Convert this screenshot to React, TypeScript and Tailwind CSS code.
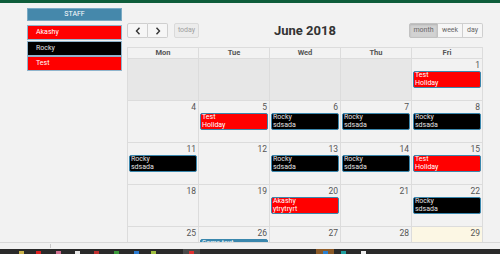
import React from 'react';

type Ev = { title: string; sub: string; color: 'red' | 'black' | 'blue' };

const cls = {
  red: 'bg-[#ff0000] text-white',
  black: 'bg-black text-[#e2e2e2]',
  blue: 'bg-[#3a87ad] text-white',
};

const weeks: { day: number | null; muted?: boolean; today?: boolean; ev?: Ev }[][] = [
  [
    { day: null, muted: true },
    { day: null, muted: true },
    { day: null, muted: true },
    { day: null, muted: true },
    { day: 1, ev: { title: 'Test', sub: 'Holiday', color: 'red' } },
  ],
  [
    { day: 4 },
    { day: 5, ev: { title: 'Test', sub: 'Holiday', color: 'red' } },
    { day: 6, ev: { title: 'Rocky', sub: 'sdsada', color: 'black' } },
    { day: 7, ev: { title: 'Rocky', sub: 'sdsada', color: 'black' } },
    { day: 8, ev: { title: 'Rocky', sub: 'sdsada', color: 'black' } },
  ],
  [
    { day: 11, ev: { title: 'Rocky', sub: 'sdsada', color: 'black' } },
    { day: 12 },
    { day: 13, ev: { title: 'Rocky', sub: 'sdsada', color: 'black' } },
    { day: 14, ev: { title: 'Rocky', sub: 'sdsada', color: 'black' } },
    { day: 15, ev: { title: 'Test', sub: 'Holiday', color: 'red' } },
  ],
  [
    { day: 18 },
    { day: 19 },
    { day: 20, ev: { title: 'Akashy', sub: 'ytrytryrt', color: 'red' } },
    { day: 21 },
    { day: 22, ev: { title: 'Rocky', sub: 'sdsada', color: 'black' } },
  ],
  [
    { day: 25 },
    { day: 26, ev: { title: 'Some text', sub: '', color: 'blue' } },
    { day: 27 },
    { day: 28 },
    { day: 29, today: true },
  ],
];

const taskIcons = [
  { x: 19, c: '#c9b24a' },
  { x: 36, c: '#e02020' },
  { x: 56, c: '#d07090' },
  { x: 75, c: '#e8e8e8' },
  { x: 94, c: '#c03030' },
  { x: 114, c: '#3a9a3a' },
  { x: 134, c: '#2a7ad0' },
  { x: 151, c: '#a0c040' },
  { x: 189, c: '#e03030' },
  { x: 323, c: '#2a80d0' },
  { x: 341, c: '#20a0a0' },
  { x: 361, c: '#f0f0f0' },
];

function Chevron({ dir }: { dir: 'l' | 'r' }) {
  return (
    <svg width="6" height="8" viewBox="0 0 6 8">
      <polyline
        points={dir === 'l' ? '4.5,0.8 1.5,4 4.5,7.2' : '1.5,0.8 4.5,4 1.5,7.2'}
        fill="none"
        stroke="#333"
        strokeWidth="1.4"
      />
    </svg>
  );
}

export default function App() {
  return (
    <div className="w-[500px] h-[254px] overflow-hidden bg-[#f2f2f2] font-['Roboto',sans-serif] text-[#333] flex flex-col">
      <div className="h-[3px] bg-[#0e5d3b] shrink-0" />
      <div className="h-[239px] flex overflow-hidden">
        {/* sidebar */}
        <div className="w-[127px] shrink-0 pl-[27px] pt-[5px]">
          <div className="w-[95px] h-[13px] bg-[#4588ab] border border-[#7aaac4] text-white text-[7px] leading-[11px] text-center">
            STAFF
          </div>
          <div className="w-[95px] mt-[4px] flex flex-col">
            {[
              ['Akashy', 'bg-[#ff0000] text-white'],
              ['Rocky', 'bg-black text-[#e2e2e2]'],
              ['Test', 'bg-[#ff0000] text-white'],
            ].map(([n, c]) => (
              <div
                key={n}
                className={`h-[15px] border border-[#8fb4cc] mb-[0.5px] pl-[8px] text-[7px] leading-[13px] ${c}`}
              >
                {n}
              </div>
            ))}
          </div>
        </div>

        {/* calendar */}
        <div className="w-[356px] shrink-0 pt-[20px]">
          <div className="grid grid-cols-[1fr_auto_1fr] items-center h-[15px]">
            <div className="flex items-center">
              <div className="flex h-[15px]">
                <div className="w-[21px] h-[15px] flex items-center justify-center bg-[#f6f6f6] border border-[#cfcfcf] rounded-l-[2px]">
                  <Chevron dir="l" />
                </div>
                <div className="w-[20px] h-[15px] flex items-center justify-center bg-[#f6f6f6] border border-l-0 border-[#cfcfcf] rounded-r-[2px]">
                  <Chevron dir="r" />
                </div>
              </div>
              <div className="ml-[6px] w-[25px] h-[15px] bg-[#ececec] border border-[#dadada] rounded-[2px] text-[7px] leading-[13px] text-center text-[#a0a0a0]">
                today
              </div>
            </div>
            <div className="text-[13px] font-bold leading-[15px] text-[#333]">June 2018</div>
            <div className="flex justify-end">
              <div className="flex h-[15px] text-[7px] leading-[13px] text-[#666]">
                <div className="w-[29px] text-center bg-[#d2d2d2] border border-[#c2c2c2] rounded-l-[2px] shadow-[inset_0_1px_2px_rgba(0,0,0,0.15)]">
                  month
                </div>
                <div className="w-[25px] text-center bg-[#f6f6f6] border border-l-0 border-[#cfcfcf]">week</div>
                <div className="w-[20px] text-center bg-[#f6f6f6] border border-l-0 border-[#cfcfcf] rounded-r-[2px]">
                  day
                </div>
              </div>
            </div>
          </div>

          <div className="mt-[9px] border-l border-t border-[#dcdcdc]">
            <div className="grid grid-cols-5">
              {['Mon', 'Tue', 'Wed', 'Thu', 'Fri'].map((d) => (
                <div
                  key={d}
                  className="h-[11px] border-r border-b border-[#dcdcdc] text-[7.5px] font-bold leading-[10px] text-center text-[#555]"
                >
                  {d}
                </div>
              ))}
            </div>
            {weeks.map((w, i) => (
              <div key={i} className="grid grid-cols-5">
                {w.map((c, j) => (
                  <div
                    key={j}
                    className={`h-[42px] border-r border-b border-[#dcdcdc] ${
                      c.muted ? 'bg-[#e7e7e7]' : c.today ? 'bg-[#fcf7e4]' : ''
                    }`}
                  >
                    <div className="h-[12px] pr-[2px] pt-[1px] text-right text-[8.5px] leading-[11px] text-[#555]">
                      {c.day ?? ''}
                    </div>
                    {c.ev && (
                      <div
                        className={`mx-px h-[17px] border border-[#3a87ad] rounded-[2px] px-px text-[7px] leading-[7.5px] overflow-hidden ${cls[c.ev.color]}`}
                      >
                        <div>{c.ev.title}</div>
                        <div>{c.ev.sub}</div>
                      </div>
                    )}
                  </div>
                ))}
              </div>
            ))}
          </div>
        </div>
      </div>

      {/* scrollbar strip */}
      <div className="h-[7px] shrink-0 border-t border-[#d8d8d8] bg-[#f1f1f1] flex items-center">
        <div className="ml-[50px] w-px h-[4px] bg-[#c8c8c8]" />
      </div>

      {/* taskbar */}
      <div className="h-[5px] shrink-0 bg-[#2a2a2a] relative">
        <div className="absolute left-[183px] top-0 w-[17px] h-[5px] bg-[#4a4a4a]" />
        <div className="absolute left-[316px] top-0 w-[18px] h-[5px] bg-[#8b5a28]" />
        {taskIcons.map((t) => (
          <div
            key={t.x}
            className="absolute top-[2px] w-[5px] h-[3px]"
            style={{ left: t.x, background: t.c }}
          />
        ))}
      </div>
    </div>
  );
}
